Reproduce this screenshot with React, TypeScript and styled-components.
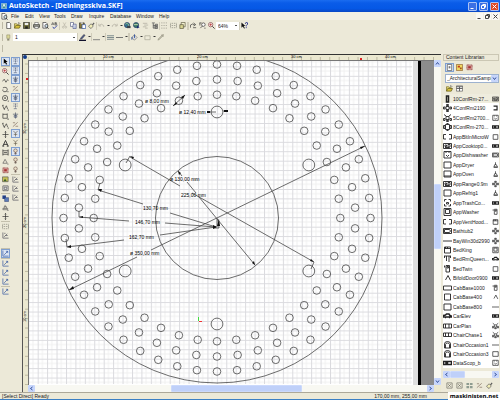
import React from "react";
import styled, { createGlobalStyle, css } from "styled-components";

const Global = createGlobalStyle`
  * { box-sizing: border-box; }
  body { margin: 0; background: #ece9d8; }
  button, select, input { font: inherit; color: inherit; margin: 0; padding: 0; border: 0; border-radius: 0; background: none; min-width: 0; }
  svg { display: block; }
`;

/* ---------- icons ---------- */

const K = "#2c2c2c";
const B = "#2b4f9e";
const G = "#b9b6a8";

const shapes: Record<string, React.ReactNode> = {
  doc: <path d="M4 1h6l3 3v11H4z" fill="#fff" stroke={K} strokeWidth="1.5" />,
  open: <><path d="M1 14V4h5l1 2h5v3" fill="#f2e27a" stroke="#6b6420" strokeWidth="1.5" /><path d="M1 14l3-6h11l-3 6z" fill="#d8c23a" stroke="#5a5418" strokeWidth="1.5" /><path d="M9 3q3-3 5 1" fill="none" stroke={K} strokeWidth="1.5" /></>,
  save: <><path d="M1 1h14v14H1z" fill="#6e6c3a" stroke={K} strokeWidth="1.5" /><path d="M4 2h8v5H4z" fill="#eee" /><path d="M5 10h6v5H5z" fill="#222" /></>,
  print: <><path d="M4 6V1h8v5" fill="#fff" stroke={K} /><path d="M1 6h14v6H1z" fill="#9a9a90" stroke={K} strokeWidth="1.5" /><path d="M4 10h8v5H4z" fill="#eee" stroke={K} /></>,
  preview: <><path d="M2 1h7l3 3v10H2z" fill="#fff" stroke={K} strokeWidth="1.5" /><circle cx="10" cy="9" r="3.5" fill="#cfe3ef" stroke={K} strokeWidth="1.5" /><path d="M12 12l3 3" stroke={K} strokeWidth="2" /></>,
  spell: <><path d="M1 7l3-6 3 6M2 5h4M9 1v6h4V4H9h3V1z" fill="none" stroke="#555" strokeWidth="1.5" /><path d="M4 11l3 4 7-7" fill="none" stroke="#2638a8" strokeWidth="2" /></>,
  cut: <path d="M5 1l5 9M11 1l-5 9M5 10a2 2 0 1 0 .1 0M11 10a2 2 0 1 0 .1 0" fill="none" stroke={G} strokeWidth="1.5" />,
  copy: <><path d="M1 1h7v9H1z" fill="#fff" stroke="#525a80" strokeWidth="1.5" /><path d="M7 5h7v10H7z" fill="#fff" stroke="#404a88" strokeWidth="1.5" /><path d="M9 9h4M9 12h4" stroke={B} /></>,
  paste: <><path d="M1 2h11v12H1z" fill="#8a7a38" stroke={K} strokeWidth="1.5" /><path d="M4 1h5v3H4z" fill="#ddd" /><path d="M7 6h8v9H7z" fill="#fff" stroke={B} strokeWidth="1.5" /></>,
  brush: <><path d="M9 6l4-5 2 2-4 5z" fill="#555" /><path d="M7 4l5 5-5 6-6-5z" fill="#f1edb8" stroke="#555" strokeWidth="1.5" /></>,
  undo: <path d="M2 4v5h5M3 8q4-6 10 0v3" fill="none" stroke={G} strokeWidth="2" />,
  redo: <path d="M14 4v5H9M13 8q-4-6-10 0v3" fill="none" stroke={G} strokeWidth="2" />,
  globe: <><circle cx="7" cy="7" r="6" fill="#356f8c" stroke="#243a66" strokeWidth="1.5" /><path d="M3 5q4-4 7 0T8 11" fill="none" stroke="#8fc48c" strokeWidth="2" /><path d="M7 9h8v5H7z" fill="#3d4148" /></>,
  globe2: <><circle cx="7" cy="7" r="6" fill="#3e7a68" stroke="#243a66" strokeWidth="1.5" /><path d="M2 6h9" stroke="#c9dfb1" strokeWidth="2" /><path d="M9 8l6 4-6 3z" fill="#1b2a70" /></>,
  faded: <path d="M2 3h10M5 7h9M2 11h8M7 14h6" stroke={G} strokeWidth="2" />,
  tree: <path d="M2 2h7M5 2v12h8M5 8h8M10 5h5v5h-5zM10 11h5v4h-5z" fill="#a9a9a0" stroke="#555" strokeWidth="1.5" />,
  dots: <path d="M1 2h14M1 8h14M1 14h14" stroke="#8d8b80" strokeWidth="2" strokeDasharray="2 3" />,
  dots2: <path d="M1 3h14v10H1zM1 8h14" fill="none" stroke="#8d8b80" strokeWidth="2" strokeDasharray="2 2" />,
  layers: <><path d="M5 1h9v10H5z" fill="#f3f0cf" stroke="#55533c" strokeWidth="1.5" /><path d="M2 6h8v9H2z" fill="#d7d493" stroke="#55533c" strokeWidth="1.5" /></>,
  app: <><path d="M1 1h14v14H1z" fill="#3f8f9a" stroke="#cfe8ee" strokeWidth="1.5" /><path d="M4 12l4-8 4 8M4 5h8" fill="none" stroke="#fff" strokeWidth="2" /></>,
  redraw: <path d="M1 13V7q5-5 10 0M8 2l5 4-5 3M7 13h7" fill="none" stroke={K} strokeWidth="1.5" />,
  zoomrt: <><circle cx="10" cy="6" r="4" fill="#fff" stroke={K} strokeWidth="1.5" /><path d="M1 2h5M2 2v6M8 9l-5 5M12 14h3" fill="none" stroke={K} strokeWidth="1.5" /></>,
  zoom: <><circle cx="6" cy="6" r="5" fill="#fff" stroke="#7d3a3a" strokeWidth="1.5" /><path d="M3 6h6M6 3v6" stroke="#b32020" strokeWidth="1.5" /><path d="M10 10l5 5" stroke={K} strokeWidth="2" /></>,
  help: <><path d="M1 1v12l3-3 3 5 2-1-3-5h4z" fill="#111" /><path d="M10 4q0-3 3-3t2 4l-3 3v2M12 12v2" fill="none" stroke="#111e80" strokeWidth="2" /></>,
  bulb: <><path d="M4 2h7v8H4z" fill="#dcd797" stroke="#7d7a58" /><path d="M5 11h5v4H5z" fill="#8b8970" /></>,
  pen: <><path d="M4 9l7-8 3 2-7 8-4 1z" fill="#4d5a8c" stroke={K} /><path d="M0 13h16v3H0z" fill="#10102c" /></>,
  line: <path d="M0 13h16" stroke="#777" strokeWidth="2" />,
  hatch: <path d="M0 4h16M0 8h16M0 12h16" stroke="#6f7f83" strokeWidth="2" />,
  dash: <path d="M0 8h16" stroke="#666" strokeWidth="2" />,
  bucket: <><path d="M3 6l5-4 6 6-6 6-5-4z" fill="#ddd" stroke="#777" strokeWidth="1.5" /><path d="M8 1v8M2 7v6" stroke={B} strokeWidth="2" /></>,
  rect: <path d="M2 4h12v9H2z" fill="none" stroke="#a5a394" strokeWidth="1.5" />,
  dropper: <path d="M2 14l3-1 8-8-2-2-8 8zM10 2l4 4 1-5z" fill="#bdbba8" stroke="#8e8c7c" />,
  pointer: <path d="M4 1v12l3-3 2 5 3-1-3-5h4z" fill="#000" />,
  poly: <path d="M1 10l4-5 4 7 4-6 2 2" fill="none" stroke={K} strokeWidth="1.5" />,
  arc: <path d="M2 4q10-3 10 4t-8 5q-3-2-2-5M12 13h3" fill="none" stroke={K} strokeWidth="1.5" />,
  circle: <><circle cx="7" cy="7" r="6" fill="none" stroke={K} strokeWidth="1.5" /><path d="M7 5v4M5 7h4M13 14h3" stroke={K} strokeWidth="1.5" /></>,
  spline: <path d="M1 3l4 9 5-8 3 8M1 3h3M13 14h3M5 12h2" fill="none" stroke={K} strokeWidth="1.5" />,
  box: <path d="M2 3h10v9H2zM12 14h4M1 2h2M11 2h2" fill="none" stroke={K} strokeWidth="1.5" />,
  text: <path d="M2 14L8 1l6 13M4 10h8M1 14h4M11 14h4" fill="none" stroke={K} strokeWidth="2" />,
  dim: <path d="M2 1v14M14 1v14M2 4h12M2 12h12M4 8h8" fill="none" stroke={K} strokeWidth="1.5" />,
  tri: <path d="M2 12L7 3l5 9zM12 14h3" fill="none" stroke="#555" strokeWidth="1.5" />,
  red: <><path d="M2 2h12v11H2z" fill="#d6a5a0" stroke="#7e2020" strokeWidth="1.5" strokeDasharray="2 1" /><path d="M5 5h6v5H5z" fill="#a63030" /></>,
  pic: <><path d="M1 2h13v11H1z" fill="#c7c258" stroke="#555" strokeWidth="1.5" /><path d="M3 12l4-6 4 6z" fill="#3b5f2d" /></>,
  chart: <><path d="M1 1h14v14H1z" fill="#f0d860" stroke="#8a5a2c" strokeWidth="1.5" /><path d="M4 4h5v4H4z" fill="#c23a20" /><path d="M9 8h4v4H9z" fill="#a0521c" /></>,
  frame: <path d="M2 2h12v11H2zM5 5h6v5H5z" fill="#eee" stroke="#444" strokeWidth="1.5" />,
  blue: <><path d="M1 1h8v8H1z" fill="#22408a" /><path d="M6 6h9v9H6z" fill="#5b7bb8" stroke="#1d2e60" /></>,
  move: <path d="M8 1v14M1 8h14M6 3l2-2 2 2M6 13l2 2 2-2" fill="none" stroke={K} strokeWidth="1.5" />,
  stamp: <path d="M2 10h11v3H2zM5 10V6h5v4M7 2v4M12 15h3" fill="none" stroke="#555" strokeWidth="1.5" />,
  axes: <path d="M2 1v13h13M5 11l8-8M9 3h4v4" fill="none" stroke={B} strokeWidth="1.5" />,
  axesk: <path d="M2 1v13h13M5 11l7-7M8 8h5M5 3h3" fill="none" stroke="#4b4b55" strokeWidth="1.5" />,
  snapg: <path d="M3 2h10M8 2v11M4 13h8M3 7h10" fill="none" stroke="#55607a" strokeWidth="1.5" strokeDasharray="3 1" />,
  snap: <path d="M2 5h12M8 1v14M5 8h6v4H5z" fill="#c8d4e8" stroke="#4b5468" strokeWidth="1.5" />,
  snapx: <path d="M3 2l5 5 5-5M8 7v8M4 10h8" fill="none" stroke="#655c4a" strokeWidth="1.5" />,
  slash: <path d="M2 13L13 3M2 4h5M8 12h6" stroke="#7c6658" strokeWidth="1.5" />,
  pin: <><circle cx="8" cy="6" r="4" fill="#eadfca" stroke="#6f584e" strokeWidth="1.5" /><path d="M8 9v6M5 13h6" stroke="#5b4b43" strokeWidth="1.5" /></>,
  book: <><path d="M3 1h10v14H3z" fill="#fff" stroke="#444" strokeWidth="1.5" /><path d="M6 5h4v5H6z" fill="#777" /></>,
  props: <><path d="M1 2h14v12H1z" fill="#fff" stroke="#555" strokeWidth="1.5" /><path d="M1 4h14M1 8h14M8 4v10" stroke="#555" strokeWidth="2" /></>,
  del: <path d="M2 2h12v12H2zM5 5l6 6M11 5l-6 6" fill="none" stroke="#6b6960" strokeWidth="1.5" />,
  tiles: <path d="M1 2h6v5H1zM9 2h6v5H9zM1 9h6v5H1zM9 9h6v5H9z" fill="#8e9c90" />,
};

const IconSvg = styled.svg<{ $w: number }>`
  width: ${(p) => p.$w}px;
  height: ${(p) => p.$w}px;
  flex: none;
`;
const Icon = ({ name, size = 7 }: { name: string; size?: number }) => (
  <IconSvg $w={size} viewBox="0 0 16 16" aria-hidden="true">{shapes[name]}</IconSvg>
);

/* ---------- window chrome ---------- */

const Window = styled.div`
  min-height: 100vh;
  display: flex;
  flex-direction: column;
  background: #ece9d8;
  color: #1a1a1a;
  font: 5px/6px "Liberation Sans", Arial, sans-serif;
  overflow: hidden;
`;
const TitleBar = styled.header`
  height: 12px;
  display: flex;
  align-items: center;
  gap: 2px;
  padding: 0 1px;
  background: linear-gradient(#1a6cf0, #0a5ce8 25%, #0558e6 70%, #0a48c4);
`;
const Title = styled.h1`
  flex: 1;
  margin: 0;
  color: #fff;
  font: bold 7px/10px "Open Sans", "Noto Sans", sans-serif;
  white-space: nowrap;
`;
const Caption = styled.button<{ $close?: boolean }>`
  && {
    width: 9px;
    height: 9px;
    border: 1px solid #a9c2f5;
    border-radius: 1px;
    background: ${(p) => (p.$close ? "#dc4a26" : "#3c70e4")};
    display: grid;
    place-items: center;
    color: #fff;
  }
`;
const CaptionIcon = styled.svg`
  width: 7px;
  height: 7px;
  fill: none;
  stroke: currentColor;
`;
const captionPaths = ["M1.5 5.5h3", "M2.5 1.5h3v3M1.5 2.5h3v3h-3z", "M1.5 1.5l4 4M5.5 1.5l-4 4"];
const MenuBar = styled.nav`
  height: 8px;
  display: flex;
  align-items: center;
  padding: 0 1px;
  background: #f2f0e4;
`;
const MenuButton = styled.button`
  && { padding: 0 3px 0 2px; line-height: 7px; }
`;
const MenuItems = styled.div`
  flex: 1;
  display: flex;
  margin-left: 1px;
`;
const DocButtons = styled.div`
  display: flex;
  gap: 1px;
  color: #444;
`;
const PlainButton = styled.button`
  && { width: 7px; height: 7px; background: #faf9f4; }
`;
const Bar = styled.div<{ $h: number }>`
  height: ${(p) => p.$h}px;
  display: flex;
  align-items: center;
  padding-left: 1px;
`;
const Grip = styled.span`
  width: 1px;
  height: 7px;
  margin: 0 1px;
  background: #bdb9a6;
`;
const Sep = styled.span`
  width: 1px;
  height: 8px;
  background: #d0ccba;
`;
const Tool = styled.button<{ $wide?: boolean; $on?: boolean }>`
  && {
    width: ${(p) => (p.$wide ? 13 : 9)}px;
    height: 9px;
    flex: none;
    display: flex;
    align-items: center;
    justify-content: center;
    gap: 2px;
    ${(p) => p.$on && css`outline: 1px solid #7f9fd0; outline-offset: -1px; background: #dce5f2;`}
  }
`;
const Caret = styled.span`
  border: 1px solid transparent;
  border-top-color: #333;
  border-bottom: 0;
  width: 3px;
  height: 2px;
  flex: none;
`;
const ZoomSelect = styled.select`
  && {
    appearance: none;
    width: 23px;
    height: 8px;
    padding: 0 2px;
    background: #fff linear-gradient(#555, #555) right 2px center / 2px 1px no-repeat;
  }
`;
const LayerSelect = styled(ZoomSelect)`
  && { width: 64px; }
`;
const Work = styled.main`
  flex: 1;
  display: grid;
  grid-template-columns: 22px minmax(0, 1fr) 57px;
  column-gap: 2px;
  min-height: 0;
`;
const Palette = styled.aside`
  display: flex;
  gap: 1px;
  padding: 3px 1px;
`;
const PaletteColumn = styled.div`
  display: flex;
  flex-direction: column;
`;
const Rule = styled.span`
  height: 1px;
  background: #c4c0ad;
`;
const Space = styled.span`
  height: 8px;
`;

/* ---------- drawing area ---------- */

const View = styled.section`
  display: grid;
  grid-template-columns: 5px minmax(0, 1fr) 7px;
  grid-template-rows: 5px minmax(0, 1fr) 7px;
  margin-left: -2px;
  border-top: 1px solid #333;
  border-left: 1px solid #555;
`;
const RulerSvg = styled.svg`
  width: 100%;
  height: 100%;
  background: #ebe8d0;
  overflow: hidden;
`;
const Corner = styled.span`
  background: #ebe8d0;
`;
const CornerDot = styled.span`
  display: block;
  width: 4px;
  height: 4px;
  border-radius: 2px;
  background: #123c8c;
`;
const Sheet = styled.div`
  display: flex;
  min-height: 0;
  overflow: hidden;
  background: #fff;
  border-left: 1px solid #777;
  border-top: 1px solid #777;
`;
const Drawing = styled.svg`
  flex: 1;
  min-width: 0;
  height: 100%;
`;
const Strip = styled.span<{ $w: number; $c: string }>`
  width: ${(p) => p.$w}px;
  background: ${(p) => p.$c};
`;
const ScrollBar = styled.div<{ $vertical?: boolean }>`
  display: flex;
  flex-direction: ${(p) => (p.$vertical ? "column" : "row")};
  background: #f8f8f2;
  min-width: 0;
  min-height: 0;
`;
const ScrollButton = styled.button`
  && {
    width: 7px;
    height: 7px;
    flex: none;
    background: #c6d5fb;
    border-radius: 1px;
    display: grid;
    place-items: center;
    color: #34509c;
  }
`;
const Fill = styled.span<{ $grow: number }>`
  flex: ${(p) => p.$grow} 1 0;
`;
const Thumb = styled(Fill)`
  background: #bfd0f9;
  border: 1px solid #cbd9fc;
  border-radius: 1px;
`;
const Arrow = ({ d }: { d: string }) => <CaptionIcon viewBox="0 0 7 7" aria-hidden="true"><path d={d} /></CaptionIcon>;
const arrows = { up: "M2 4.5l1.5-2 1.5 2", down: "M2 2.5l1.5 2 1.5-2", left: "M4.5 2l-2 1.5 2 1.5", right: "M2.5 2l2 1.5-2 1.5" };

const CM = 9.43;
const CX = 217;
const CY = 218;
const rings = [
  { r: 153.5, n: 48 },
  { r: 138.5, n: 42 },
  { r: 123.3, n: 40 },
];
const onRing = (r: number, n: number, i: number) => {
  const a = (i / n) * Math.PI * 2;
  return { cx: CX + r * Math.sin(a), cy: CY - r * Math.cos(a) };
};
const labels: [number, number, string][] = [
  [145, 103, "ø 8,00 mm"],
  [179, 114, "ø 12,40 mm"],
  [170, 181, "ø 130,00 mm"],
  [181, 197, "225,00 mm"],
  [143, 210, "130,70 mm"],
  [135, 224, "146,70 mm"],
  [129, 239, "162,70 mm"],
  [130, 255, "ø 350,00 mm"],
];
const dimensionPaths = [
  "M130 157L180 186M192 193L314 262M130 156l-4 7M314 262l-3 7",
  "M178 171L182 176M187 182L196 193M199 197L255 265",
  "M98 190L143 204M170 213L216 227M98 190l2-7",
  "M79 217L129 221M165 223L216 227M79 217v-6",
  "M67 247L124 240M160 235L216 227M67 247l-1-8",
  "M69 290L137 257M151 250L365 146",
  "M173 106L185 95M207 112L216 112M223 111L228 111",
  "M217 218v9M213 228h6l-1-9",
];
const arrowHeads = "M130 156l4 1-1 2zM314 262l-4-1 1-2zM178 171l3 2-2 2zM255 265l-1-4-2 2zM98 189l4 0-1 3zM79 217l4-1v2zM67 247l4-2v3zM69 290l5-1-1-3zM365 146l-5 1 1 2zM173 106l4-2-1-2zM185 95l-4 2 2 2zM207 111h3v2h-3zM224 110h4v2h-4zM213 225l4 2-4 2zM219 219l-2 7h3z";

const GridLines = () => (
  <>
    <defs>
      <pattern id="grid" width={CM} height={CM} patternUnits="userSpaceOnUse" x="198" y="321">
        <path d={`M${CM / 2} 0V${CM}M0 ${CM / 2}H${CM}`} stroke="#f0f0f0" fill="none" />
        <path d={`M.5 0V${CM}M0 .5H${CM}`} stroke="#dadade" fill="none" />
      </pattern>
    </defs>
    <rect x="28" y="60" width="100%" height="100%" fill="url(#grid)" />
  </>
);

const SvgLabel = styled.text`
  font: 5px "Liberation Sans", Arial, sans-serif;
  fill: #000;
`;

const Plate = () => (
  <Drawing role="img" aria-label="Delningsskiva">
    <g transform="translate(-29 -61)">
      <GridLines />
      <g fill="none" stroke="#484848" strokeWidth="0.8">
        <circle cx={CX} cy={CY} r="165" />
        <circle cx={CX} cy={CY} r="61.5" />
        {rings.map(({ r, n }) =>
          Array.from({ length: n }, (_, i) => <circle key={`${r}-${i}`} {...onRing(r, n, i)} r="3.8" />)
        )}
        {Array.from({ length: 6 }, (_, i) => <circle key={i} {...onRing(106, 6, i)} r="5.9" />)}
        {dimensionPaths.map((d) => <path key={d} d={d} />)}
      </g>
      <path d={arrowHeads} fill="#111" />
      {labels.map(([x, y, t]) => <SvgLabel key={t} x={x} y={y}>{t}</SvgLabel>)}
      <path d="M198 317h1v4h-1z" fill="#3fdc3f" />
      <path d="M199 321h3v1h-3z" fill="#f03030" />
    </g>
  </Drawing>
);

const RulerLabel = styled.text`
  font: 4px "Liberation Sans", Arial, sans-serif;
  fill: #000;
`;
const ticks = Array.from({ length: 60 }, (_, i) => i * CM);
const TopRuler = () => (
  <RulerSvg aria-label="Horizontal ruler">
    {ticks.map((t) => <path key={t} d={`M${t} 2v3`} stroke="#aaa68e" strokeWidth="0.7" />)}
    {["10 cm", "20 cm", "30 cm", "40 cm"].map((t, i) => <RulerLabel key={t} x={75 + i * 94} y="3">{t}</RulerLabel>)}
    <path d="M332 3h2v2h-2z" fill="#d22" />
  </RulerSvg>
);
const SideRuler = () => (
  <RulerSvg aria-label="Vertical ruler">
    {ticks.map((t) => <path key={t} d={`M2 ${t + 4}h3`} stroke="#aaa68e" strokeWidth="0.7" />)}
    {["30 cm", "20 cm", "10 cm"].map((t, i) => (
      <RulerLabel key={t} transform={`translate(3 ${74 + i * 94}) rotate(-90)`}>{t}</RulerLabel>
    ))}
    <path d="M3 18h2v2H3z" fill="#d22" />
  </RulerSvg>
);

/* ---------- content librarian ---------- */

const Panel = styled.aside`
  display: flex;
  flex-direction: column;
  min-width: 0;
  padding-right: 1px;
`;
const PanelTitle = styled.h2`
  margin: 0;
  height: 7px;
  padding-left: 2px;
  border: 1px solid #cbc7b4;
  font: 5px/5px "Liberation Sans", Arial, sans-serif;
  white-space: nowrap;
`;
const PanelRow = styled.div<{ $h: number }>`
  height: ${(p) => p.$h}px;
  display: flex;
  align-items: center;
  gap: 1px;
  padding-left: 2px;
`;
const LibrarySelect = styled.div`
  display: flex;
  height: 9px;
  margin-left: 2px;
  border: 1px solid #9db2cf;
  background: #fff;
`;
const LibraryField = styled.select`
  && { appearance: none; flex: 1; width: 0; padding-left: 1px; line-height: 7px; }
`;
const List = styled.ul`
  flex: 1;
  margin: 0 0 3px;
  padding: 0;
  list-style: none;
  display: flex;
  flex-direction: column;
  background: #fff;
`;
const ListItem = styled.li<{ $on: boolean }>`
  flex: 1 1 0;
  display: grid;
  grid-template-columns: 9px minmax(0, 1fr) 7px;
  align-items: center;
  gap: 1px;
  background: ${(p) => (p.$on ? "#efedde" : "transparent")};
`;
const ItemName = styled.span`
  white-space: nowrap;
  overflow: hidden;
`;
const Symbol = styled.svg<{ $w: number }>`
  width: ${(p) => p.$w}px;
  height: 8px;
  fill: none;
  stroke: #222;
`;

const sym = {
  table: "M7 2h4v12H7z",
  bracket: "M4 3h9v10H4",
  plus: "M6 5h6v6H6zM7 1h4v2H7zM7 13h4v2H7zM1 6h3v4H1zM14 6h3v4h-3z",
  star: "M6 5h6v6H6zM2 1l4 3M16 1l-4 3M1 9h3v4H1zM14 9h3v4h-3zM7 13h4v2H7z",
  ring: "M5 3h8v10H5zM1 5h3v6H1zM14 5h3v6h-3zM7 1h4M7 15h4",
  split: "M6 3H1v9h5M12 3h5v9h-5",
  cooktop: "M1 3h16v10H1zM4 6h3v3H4zM10 5h4v5h-4zM4 11h9",
  washer: "M2 1h14v13H2zM5 3h2M11 3h2M6 8l3 3 3-3",
  square: "M2 2h14v12H2z",
  base: "M2 2h14v12H2zM2 12h14",
  inner: "M2 1h14v14H2zM5 3h8v8H5z",
  dashed: "M3 5V1h4M11 1h4v4M15 10v4h-4M7 14H3v-4M7 7h4v3H7z",
  tub: "M1 3h16v10H1zM3 5h10l2 3-2 3H3z",
  thin: "M0 8h18",
  bed: "M3 2h12v12H3zM3 5h12M5 2v3M9 2v3",
  twin: "M6 1h7v13H6zM8 3h3v3H8zM3 1v4",
  beds: "M2 2h14M3 2v4M7 2v10M12 2v12M15 2v4",
  fold: "M5 12L10 3l5 10",
  cab: "M1 4h16v8H1z",
  small: "M5 2H3v12h2M13 2h2v12h-2M5 2h8M5 14h8",
  lamp: "M9 1v6M5 13l2-6h4l3 6zM4 14h11",
  carSide: "M1 10V7l4-1 2-2h5l2 3 3 1v2zM4 11h2M12 11h2",
  carTop: "M1 4h16v8H1zM5 4v8M12 4v8",
  chaise: "M1 4h16v7H1zM11 4v7M5 4v7",
  chair: "M3 14V6q0-5 6-5t6 5v8zM5 14V7q1-3 4-3t4 3v7",
  data: "M1 5h5v6H1zM9 5h8v6H9z",
};
type Sym = keyof typeof sym;
const items: [string, Sym, Sym][] = [
  ["10ConfRm-27...", "table", "cooktop"],
  ["4ConfRm2190", "plus", "bracket"],
  ["5ConfRm2700...", "star", "washer"],
  ["8ConfRm-270...", "ring", "data"],
  ["AppBltInMicroW", "split", "small"],
  ["AppCooktop0...", "cooktop", "data"],
  ["AppDishwasher", "washer", "tub"],
  ["AppDryer", "square", "lamp"],
  ["AppOven", "base", "lamp"],
  ["AppRange0.9m", "cooktop", "plus"],
  ["AppRefrig1", "square", "lamp"],
  ["AppTrashCo...", "dashed", "data"],
  ["AppWasher", "inner", "twin"],
  ["AppVentHood...", "split", "bed"],
  ["Bathtub2", "tub", "plus"],
  ["BayWin30d2990", "thin", "plus"],
  ["BedKing", "bed", "inner"],
  ["BedRmQueen...", "beds", "carSide"],
  ["BedTwin", "twin", "small"],
  ["BifoldDoor0900", "fold", "data"],
  ["CabBase1000", "cab", "twin"],
  ["CabBase400", "small", "fold"],
  ["CabBase800", "square", "thin"],
  ["CarElev", "carSide", "data"],
  ["CarPlan", "carTop", "star"],
  ["ChairChase1", "chaise", "star"],
  ["ChairOccasion1", "chair", "thin"],
  ["ChairOccasion3", "chair", "square"],
  ["DataScop_b", "data", "washer"],
];
const heavy: Sym[] = ["carSide", "data", "table", "bracket"];
const PartSymbol = ({ kind, width }: { kind: Sym; width: number }) => (
  <Symbol $w={width} viewBox="0 0 18 16" aria-hidden="true">
    <path d={sym[kind]} strokeWidth={heavy.includes(kind) ? 3 : 1.8} />
  </Symbol>
);

/* ---------- status ---------- */

const Status = styled.footer`
  display: grid;
  grid-template-columns: minmax(0, 1fr) 52px;
  height: 8px;
`;
const StatusLine = styled.div`
  display: flex;
  justify-content: space-between;
  padding: 0 21px 0 2px;
  border-top: 1px solid #aca899;
  border-bottom: 1px solid #3b7fc4;
`;
const Watermark = styled.strong`
  background: #fff;
  color: #000;
  text-align: center;
  font: bold 6px/8px "Open Sans", "Noto Sans", sans-serif;
`;

const menus = [["File", 14], ["Edit", 14], ["View", 15], ["Tools", 17], ["Draw", 18], ["Inquire", 21], ["Database", 26], ["Window", 23], ["Help", 14]] as const;
const MenuSlot = styled.span<{ $w: number }>`
  width: ${(p) => p.$w}px;
`;
const standardTools = ["doc", "open", "save", "|", "print", "preview", "spell", "|", "cut", "copy", "paste", "brush", "|", "undo+", "redo+", "globe", "globe2", "faded", "tree", "|", "dots", "dots2", "layers", "|", "|", "redraw", "zoomrt", "zoom"];
const styleTools = ["pen+", "|", "line+", "|", "hatch", "dash+", "|", "|", "bucket+", "rect+", "dropper"];
const drawTools = ["pointer*", "|", "zoom", "poly", "arc", "circle", "spline", "box", "spline", "move", "text", "dim", "tri", "red", "pic", "frame", "|", "blue", "stamp", "move", "|", "dots2", "axesk", "_", "|", "axes*", "|", "axes", "axes", "axes", "|", "axes"];
const snapTools = ["snapg*", "snapg*", "snap*", "slash", "snap*", "snapg", "snap", "slash", "snapx*", "snapx", "pin*", "pin", "pin", "|", "axesk", "axesk", "axesk"];

const Tools = ({ names, column }: { names: string[]; column?: boolean }) => (
  <>
    {names.map((raw, i) => {
      if (raw === "|") return column ? <Rule key={i} /> : <Sep key={i} />;
      if (raw === "_") return <Space key={i} />;
      const name = raw.replace(/[+*]/, "");
      const wide = raw.endsWith("+");
      return (
        <Tool key={i} $wide={wide} $on={raw.endsWith("*")} aria-label={name}>
          <Icon name={name} />
          {wide && <Caret />}
        </Tool>
      );
    })}
  </>
);

export default function App() {
  return (
    <>
      <Global />
      <Window>
        <TitleBar>
          <Icon name="app" size={6} />
          <Title>AutoSketch - [Delningsskiva.SKF]</Title>
          {captionPaths.map((d, i) => (
            <Caption key={d} $close={i === 2} aria-label={["Minimize", "Restore", "Close"][i]}>
              <Arrow d={d} />
            </Caption>
          ))}
        </TitleBar>
        <MenuBar>
          <Icon name="preview" />
          <MenuItems>
            {menus.map(([t, w]) => <MenuSlot key={t} $w={w}><MenuButton>{t}</MenuButton></MenuSlot>)}
          </MenuItems>
          <DocButtons>
            {captionPaths.map((d, i) => (
              <PlainButton key={d} aria-label={["Minimize drawing", "Restore drawing", "Close drawing"][i]}><Arrow d={d} /></PlainButton>
            ))}
          </DocButtons>
        </MenuBar>
        <Bar $h={11}>
          <Grip />
          <Tools names={standardTools} />
          <ZoomSelect aria-label="Zoom"><option>64%</option></ZoomSelect>
          <Sep />
          <Tools names={["help"]} />
        </Bar>
        <Bar $h={12}>
          <Grip />
          <Tools names={["bulb"]} />
          <LayerSelect aria-label="Layer"><option>1</option></LayerSelect>
          <Sep />
          <Tools names={styleTools} />
        </Bar>
        <Bar $h={11}><Grip /></Bar>
        <Work>
          <Palette>
            <PaletteColumn><Tools names={drawTools} column /></PaletteColumn>
            <PaletteColumn><Tools names={snapTools} column /></PaletteColumn>
          </Palette>
          <View>
            <Corner><CornerDot /></Corner>
            <TopRuler />
            <Corner />
            <SideRuler />
            <Sheet>
              <Plate />
              <Strip $w={5} $c="#dedede" />
              <Strip $w={3} $c="#000" />
              <Strip $w={13} $c="#8c8c8c" />
            </Sheet>
            <ScrollBar $vertical>
              <ScrollButton aria-label="Scroll up"><Arrow d={arrows.up} /></ScrollButton>
              <Fill $grow={117} />
              <Thumb $grow={64} />
              <Fill $grow={129} />
              <ScrollButton aria-label="Scroll down"><Arrow d={arrows.down} /></ScrollButton>
            </ScrollBar>
            <Corner />
            <ScrollBar>
              <ScrollButton aria-label="Scroll left"><Arrow d={arrows.left} /></ScrollButton>
              <Fill $grow={136} />
              <Thumb $grow={130} />
              <Fill $grow={125} />
              <ScrollButton aria-label="Scroll right"><Arrow d={arrows.right} /></ScrollButton>
            </ScrollBar>
            <Corner />
          </View>
          <Panel>
            <PanelTitle>Content Librarian</PanelTitle>
            <PanelRow $h={13}><Tools names={["book*", "chart", "red"]} /></PanelRow>
            <LibrarySelect>
              <LibraryField aria-label="Library"><option>_ArchitecturalSampler.s</option></LibraryField>
              <ScrollButton as="span" aria-hidden="true"><Arrow d={arrows.down} /></ScrollButton>
            </LibrarySelect>
            <PanelRow $h={11}><Tools names={["open", "props"]} /></PanelRow>
            <List>
              {items.map(([name, left, right], i) => (
                <ListItem key={name} $on={i === 0}>
                  <PartSymbol kind={left} width={9} />
                  <ItemName>{name}</ItemName>
                  <PartSymbol kind={right} width={7} />
                </ListItem>
              ))}
            </List>
            <ScrollBar>
              <ScrollButton aria-label="Scroll list left"><Arrow d={arrows.left} /></ScrollButton>
              <Thumb $grow={13} />
              <Fill $grow={28} />
              <ScrollButton aria-label="Scroll list right"><Arrow d={arrows.right} /></ScrollButton>
            </ScrollBar>
            <PanelRow $h={14}><Tools names={["del", "del", "tiles", "slash", "brush"]} /></PanelRow>
          </Panel>
        </Work>
        <Status>
          <StatusLine>
            <span>[Select Direct] Ready</span>
            <span>170,00 mm, 255,00 mm</span>
          </StatusLine>
          <Watermark>maskinisten.net</Watermark>
        </Status>
      </Window>
    </>
  );
}
